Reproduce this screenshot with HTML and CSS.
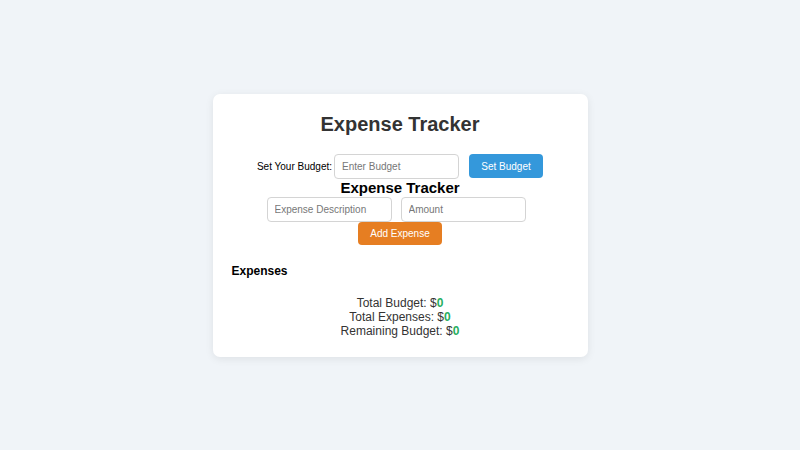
FILE: index.html
```html
<!DOCTYPE html>
<html lang="en">
<head>
<meta charset="UTF-8">
<title>Expense Tracker</title>
<link rel="stylesheet" href="styles.css">
</head>
<body>
<div class="card">
  <h1 class="title">Expense Tracker</h1>
  <div class="budget-row">
    <label class="label" for="budget">Set Your Budget:</label>
    <input class="field" id="budget" type="number" placeholder="Enter Budget">
    <button class="btn btn-blue">Set Budget</button>
  </div>
  <h2 class="subtitle">Expense Tracker</h2>
  <div class="expense-row">
    <input class="field" type="text" placeholder="Expense Description">
    <input class="field" type="number" placeholder="Amount">
  </div>
  <button class="btn btn-orange">Add Expense</button>
  <h3 class="section">Expenses</h3>
  <div class="totals">
    <div>Total Budget: $<span class="val">0</span></div>
    <div>Total Expenses: $<span class="val">0</span></div>
    <div>Remaining Budget: $<span class="val">0</span></div>
  </div>
</div>
</body>
</html>
```
FILE: styles.css
```css
* { box-sizing: border-box; }
html, body { margin: 0; padding: 0; }
body {
  background: #f0f4f8;
  font-family: "Liberation Sans", Arial, sans-serif;
  height: 450px;
  display: flex;
  justify-content: center;
  align-items: center;
}
.card {
  width: 375px;
  background: #fff;
  border-radius: 7px;
  box-shadow: 0 2px 8px rgba(0,0,0,0.08);
  padding: 16px 19px 19px;
}
.title {
  margin: 0 0 16px;
  font-size: 20px;
  line-height: 28px;
  text-align: center;
  color: #333;
}
.budget-row {
  display: flex;
  justify-content: center;
  align-items: center;
  height: 25px;
}
.label { font-size: 10px; color: #000; margin-right: 2px; }
.field {
  width: 125px;
  height: 25px;
  border: 1px solid #d4d4d4;
  border-radius: 4px;
  padding: 0 7px;
  font-family: "Liberation Sans", Arial, sans-serif;
  font-size: 10px;
  color: #333;
  outline: none;
}
.field::placeholder { color: #777; }
.btn {
  border: none;
  border-radius: 4px;
  color: #fff;
  font-family: "Liberation Sans", Arial, sans-serif;
  font-size: 10px;
  cursor: pointer;
}
.btn-blue { background: #3498db; width: 74px; height: 24px; margin-left: 10px; }
.btn-orange { background: #e67e22; width: 84px; height: 23px; display: block; margin: 0 auto; }
.subtitle {
  margin: 0;
  font-size: 15px;
  line-height: 17px;
  text-align: center;
  color: #000;
}
.expense-row {
  display: flex;
  justify-content: center;
  gap: 9px;
  margin-top: 1px;
  padding-right: 8px;
}
.section {
  margin: 19px 0 0;
  font-size: 12px;
  line-height: 14px;
  color: #000;
}
.totals {
  margin-top: 18px;
  text-align: center;
  font-size: 12px;
  line-height: 14px;
  color: #333;
}
.val { color: #27ae60; font-weight: bold; }
```
